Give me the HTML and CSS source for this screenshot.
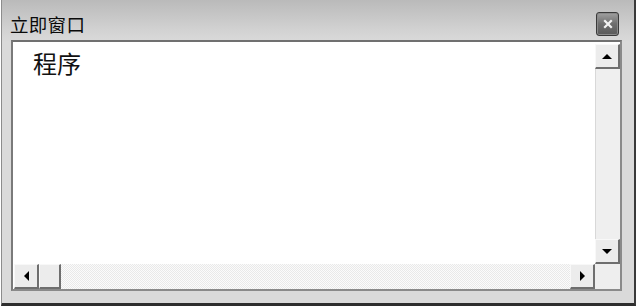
FILE: index.html
```html
<!DOCTYPE html>
<html lang="zh">
<head>
<meta charset="utf-8">
<title>立即窗口</title>
<link rel="stylesheet" href="styles.css">
</head>
<body>
<div class="window">
  <div class="titlebar">
    <span class="title">立即窗口</span>
    <span class="close" aria-label="关闭">
      <svg width="10" height="10" viewBox="0 0 10 10"><path d="M2 2 L8 8 M8 2 L2 8" stroke="#f2f2f2" stroke-width="2.2" stroke-linecap="square"/></svg>
    </span>
  </div>
  <div class="panel">
    <div class="editor">程序</div>
    <div class="vscroll">
      <div class="sbtn"><span class="arrow up"></span></div>
      <div class="vtrack"></div>
      <div class="sbtn"><span class="arrow down"></span></div>
    </div>
    <div class="hscroll">
      <div class="sbtn"><span class="arrow left"></span></div>
      <div class="sbtn thumb"></div>
      <div class="htrack"></div>
      <div class="sbtn"><span class="arrow right"></span></div>
    </div>
    <div class="corner"></div>
  </div>
</div>
</body>
</html>
```
FILE: styles.css
```css
html, body {
  margin: 0;
  padding: 0;
  background: #ffffff;
  overflow: hidden;
}
body {
  width: 641px;
  height: 306px;
  font-family: "Noto Sans CJK SC", "Noto Sans", sans-serif;
}
.window {
  box-sizing: border-box;
  margin-left: 1px;
  width: 635px;
  height: 306px;
  border-left: 1px solid #8c8c8c;
  border-right: 2px solid #3a3a3a;
  border-bottom: 3px solid #2e2e2e;
  background: linear-gradient(#bababa 0, #d2d2d2 30px, #dadada 42px, #dadada 100%);
  display: flex;
  flex-direction: column;
}
.titlebar {
  height: 40px;
  display: flex;
  align-items: center;
  justify-content: space-between;
  padding: 0 15px 0 8px;
  box-sizing: border-box;
}
.title {
  font-size: 18.5px;
  line-height: 20px;
  color: #0a0a0a;
  letter-spacing: 0.3px;
  margin-top: 8px;
}
.close {
  width: 23px;
  height: 24px;
  box-sizing: border-box;
  border: 1px solid #3a3a3a;
  border-radius: 3px;
  background: linear-gradient(#a0a0a0, #6e6e6e 50%, #5a5a5a);
  box-shadow: inset 0 0 0 1px #8a8a8a;
  display: flex;
  align-items: center;
  justify-content: center;
  margin-top: 7px;
}
.panel {
  flex: 1;
  margin: 0 12px 12px 9px;
  border: 2px solid #8a8a8a;
  border-top-color: #707070;
  border-left-color: #7a7a7a;
  background: #ffffff;
  display: grid;
  grid-template-columns: 1fr 25px;
  grid-template-rows: 1fr 25px;
}
.editor {
  padding: 6px 0 0 20px;
  font-size: 24px;
  line-height: 30px;
  color: #111;
}
.vscroll {
  display: flex;
  flex-direction: column;
  padding-top: 2px;
}
.vtrack {
  flex: 1;
  background: #efefef;
  border-left: 1px solid #d8d8d8;
}
.hscroll {
  display: flex;
  padding-left: 1px;
}
.htrack {
  flex: 1;
  background-color: #f6f6f6;
  background-image: repeating-conic-gradient(#e9e9e9 0 25%, #fbfbfb 0 50%);
  background-size: 2px 2px;
}
.corner {
  background: #eeeeee;
}
.sbtn {
  width: 25px;
  height: 25px;
  box-sizing: border-box;
  background: #ececec;
  border-top: 1px solid #f8f8f8;
  border-left: 1px solid #f8f8f8;
  border-right: 2px solid #6e6e6e;
  border-bottom: 2px solid #6e6e6e;
  display: flex;
  align-items: center;
  justify-content: center;
  flex: none;
}
.thumb {
  width: 22px;
}
.arrow {
  width: 0;
  height: 0;
  border-style: solid;
  border-color: transparent;
}
.arrow.up {
  border-width: 0 5px 5px 5px;
  border-bottom-color: #000;
}
.arrow.down {
  border-width: 5px 5px 0 5px;
  border-top-color: #000;
}
.arrow.left {
  border-width: 5px 5px 5px 0;
  border-right-color: #000;
}
.arrow.right {
  border-width: 5px 0 5px 5px;
  border-left-color: #000;
}
```
